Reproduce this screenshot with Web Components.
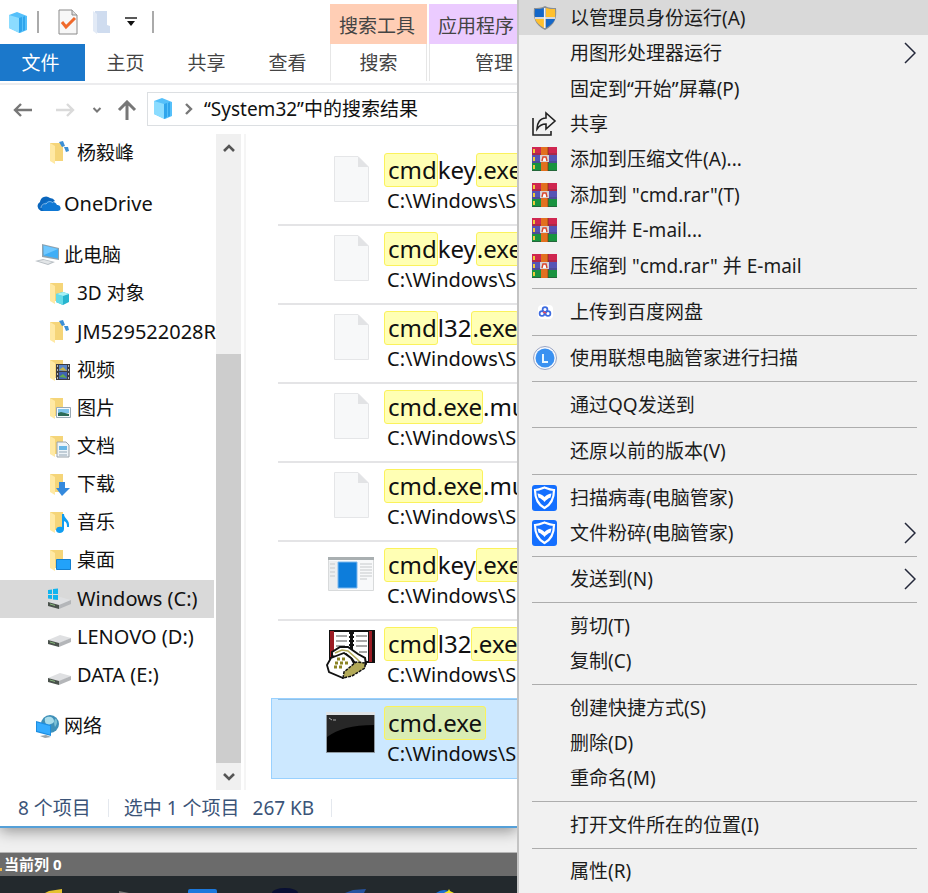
<!DOCTYPE html>
<html lang="zh-CN">
<head>
<meta charset="utf-8">
<title>System32 - 搜索结果</title>
<style>
html, body { margin: 0; height: 100%; }
body { font: 19px/26px "Noto Sans", "Noto Sans CJK SC", sans-serif; color: #111; background: #f0f0f0; overflow: hidden; }
</style>
</head>
<body>
<desktop-screen></desktop-screen>
<script>
const FOLDER = '<path d="M3 3h13v18H6l-3-2z" fill="#f5d579"/><path d="M3 3l5 3v18l-5-3z" fill="#ffe9a4"/>';
const DRIVE = '<path d="M1 16l12-5 11 3-12 6z" fill="#dfe0e2"/><path d="M1 16l11 3v4L1 20z" fill="#4a524c"/><path d="M12 19l12-5v4l-12 5z" fill="#b4b6b9"/><path d="M3 18l5 1.500" stroke="#86b77c"/>';
const BOX = '<path d="M0 3l8-3 10 4v14l-7 3-11-5z" fill="#55c0fa"/><path d="M0 3l10 3v15L0 16z" fill="#8bdcff"/><path d="M10 6l3-1v14l-3 2zM14 5l2-1v14l-2 1z" fill="#2fa5ec"/>';
const ICONS = {
  box: [18, 21, BOX],
  check: [24, 26, '<path d="M3 1h13l5 5v19H3z" fill="#f7f7f7" stroke="#8b8b8b"/><path d="M16 1v5h5" fill="#ddd" stroke="#8b8b8b"/><path d="M6 13l4 5 9-9" fill="none" stroke="#f0692b" stroke-width="3"/>'],
  paleFolder: [24, 26, '<path d="M5 2h12v14l3 1v7H8l-3-2z" fill="#cfdcef"/><path d="M3 2l4 3v20l-4-3z" fill="#e2eaf6"/>'],
  caret: [14, 12, '<path d="M1 2h12" stroke="#222" stroke-width="1.500"/><path d="M3 5h8l-4 5z" fill="#111"/>'],
  back: [20, 20, '<path d="M19 10H2M8 4l-6 6 6 6" fill="none" stroke="#777" stroke-width="2.400"/>'],
  forward: [20, 20, '<path d="M1 10h17M12 4l6 6-6 6" fill="none" stroke="#dadada" stroke-width="2.400"/>'],
  down: [10, 8, '<path d="M1.500 2L5 5.500 8.500 2" fill="none" stroke="#777" stroke-width="2"/>'],
  up: [20, 20, '<path d="M10 20V3M2 10l8-8 8 8" fill="none" stroke="#777" stroke-width="3"/>'],
  crumb: [10, 12, '<path d="M3 1l5 5-5 5" fill="none" stroke="#777" stroke-width="2.400"/>'],
  scrollUp: [14, 12, '<path d="M2 9l5-5 5 5" fill="none" stroke="#555" stroke-width="2.600"/>'],
  scrollDown: [14, 12, '<path d="M2 3l5 5 5-5" fill="none" stroke="#555" stroke-width="2.600"/>'],
  zip: [26, 26, FOLDER + '<path d="M12 2l4-1 2 5-3 1zM17 7l4 0 1 4-3 1z" fill="#3c8fd6"/>'],
  cloud: [26, 26, '<path d="M6 20a5 5 0 0 1-1-9 6 6 0 0 1 10-4 6 6 0 0 1 5 3l-9 4-2 6z" fill="#0a66bd"/><path d="M9 20a4 4 0 0 1 0-7 5 5 0 0 1 8-2 5 5 0 0 1 5 3 3 3 0 0 1 1 6z" fill="#0f78d4"/><path d="M6 17c0-3 3-5 5-4 2-3 5-3 7-1" fill="none" stroke="#b5d6f2" stroke-width=".7"/>'],
  pc: [26, 26, '<path d="M7 2l17 4v12L7 15z" fill="#8fa3b0"/><path d="M8.500 3.500L23 7v9.500l-14.500-3z" fill="#3faef6"/><path d="M8.500 3.500L23 7l-14 6z" fill="#70c8ff"/><path d="M0 19l8-2 12 3-7 3z" fill="#b9bfc4"/><path d="M3 19l6-1 8 2-4 2z" fill="#e3e6e8"/>'],
  cube: [26, 26, FOLDER + '<path d="M9 14l7-2 6 2v8l-6 3-7-3z" fill="#27b5cf"/><path d="M9 14l7 2v9l-7-3z" fill="#65dbe8"/><path d="M9 14l7-2 6 2-6 2z" fill="#a5f1f5"/>'],
  video: [26, 26, FOLDER + '<path d="M9 7h14v16H9z" fill="#3c3c42"/><path d="M12 8h8v6h-8z" fill="#5a86c8"/><path d="M12 15h8v7h-8z" fill="#3e62b4"/><path d="M12 13l4-3 4 4z" fill="#c4b44a"/><path d="M12 20l4-3 4 4z" fill="#5faa50"/><path d="M10.500 8v15M21.500 8v15" stroke="#bbb" stroke-dasharray="2 2"/>'],
  picture: [26, 26, FOLDER + '<path d="M9.500 12.500h14v10h-14z" fill="#f4f9fc" stroke="#9aa9b5"/><path d="M11 14h11v4H11z" fill="#7fc4ec"/><path d="M11 18l3-1 8 2v2H11z" fill="#2c6b58"/>'],
  doc: [26, 26, FOLDER + '<path d="M10 9h9l3 3v12H10z" fill="#eef4f8" stroke="#9aa3aa"/><path d="M12 13h8v4h-8z" fill="#69b6e6"/><path d="M12 19h8M12 22h8" stroke="#93a6b5"/>'],
  download: [26, 26, FOLDER + '<path d="M12 11h6v6h5l-8 8-6-8h3z" fill="#3489dd"/>'],
  music: [26, 26, FOLDER + '<path d="M15 5h2c0 5 6 5 5 13h-2c0-4-1-5-3-6v8c0 5-8 5-8 1 0-3 3-4 6-3z" fill="#109df0"/>'],
  desktop: [26, 26, FOLDER + '<path d="M9.500 12.500h14v10h-14z" fill="#22a2fa" stroke="#1480d0"/>'],
  winDrive: [26, 26, DRIVE + '<path d="M1 4l4-.5V8H1zM6 3l5-.6V8H6zM1 9h4v4l-4-.5zM6 9h5v5l-5-.6z" fill="#10b4ee"/>'],
  drive: [26, 26, DRIVE],
  network: [26, 26, '<circle cx="15" cy="11" r="9" fill="#3f90b8"/><path d="M10 5c5-3 9 0 9 3s-3 2-5 4-5-3-4-7z" fill="#a9dcea"/><path d="M20 14c3-4 2-7 1-8s-3 3-1 8z" fill="#7cc1d6"/><path d="M1 8l15 4v11L1 19z" fill="#1e8ee0"/><path d="M2 9.500l13 3.500v8.500L2 18z" fill="#35acff"/><path d="M5 23l6-1 5 2-6 1z" fill="#9ba5ab"/>'],
  file: [48, 48, '<path d="M7.500.5H31L41.500 11v34.500h-34z" fill="#f7f8f9" stroke="#e5e6e8"/><path d="M31 .5V11h10.500z" fill="#e2e3e5"/>'],
  app: [48, 48, '<path d="M1.500 6.500h45v33h-45z" fill="#f8f9fa" stroke="#d8dadb"/><path d="M1 6h46v3H1z" fill="#a9afb1"/><path d="M2 10h9v29H2z" fill="#eceeef"/><path d="M3 13h5M3 17h5M3 21h5M3 25h5M33 13h12M33 16h12M33 19h12M33 22h12M33 25h12M33 28h7" stroke="#c6c9cb"/><path d="M11 11h19v26H11z" fill="#0d7ddb" stroke="#7ab8ee"/>'],
  phone: [50, 50, '<path d="M3 1h46v33H3z" fill="#111"/><path d="M4 2h4v26H4zM43 2h3v31h-3z" fill="#9c1c24"/><path d="M8 3h16v26H8zM27 3h15v29H27z" fill="#fff"/><path d="M10 7h11M10 12h11M10 17h9M30 7h11M30 12h11M30 17h11M33 23h8" stroke="#8a8a8a" stroke-width="1.500"/><path d="M23 4h5M23 8h5M23 12h5M23 16h5" stroke="#111" stroke-width="2"/><path d="M6 27v-4l8-5h8l10 7 7 4 1 6-3 3-6-1-5-7-6-5-5 1-3 3z" fill="#fff" stroke="#111" stroke-width="2"/><path d="M9 24l7-3 6 1 9 8 5 5" fill="none" stroke="#b3aa59" stroke-width="1.500"/><path d="M1 36l4-7 13-5 7 5 5 9-13 11-14-6z" fill="#fff" stroke="#111" stroke-width="1.800"/><path d="M17 49l1-6 12-10 9 1v5l-13 8z" fill="#b3aa59" stroke="#111" stroke-width="1.500" stroke-dasharray="3 1"/><path d="M11 30h3M16 30h3M9 34h3M14 34h3M19 34h3M8 38h3M13 38h3" stroke="#8b8425" stroke-width="3"/>'],
  cmd: [50, 44, '<path d="M.5 2.500h48v39H.5z" fill="#000" stroke="#8d979f"/><path d="M0 1h49v3H0z" fill="#dfe3e6"/><path d="M1 4h47v10C26 14 12 18 1 26z" fill="#272727"/><path d="M3 7l3 2M7 9h3" stroke="#aaa"/>'],
  shield: [26, 26, '<path d="M13 1c4 2 7 2 11 2 1 10-1 17-11 22C3 20 1 13 2 3c4 0 7 0 11-2z" fill="#8a8f94"/><path d="M12 3v9H3c-.5-3 0-5 0-8 4 0 6 0 9-1z" fill="#1467c8"/><path d="M14 3v9h9c.5-3 0-5 0-8-4 0-6 0-9-1z" fill="#ffc02e"/><path d="M12 14v9c-5-3-8-6-9-9z" fill="#ffc02e"/><path d="M14 14v9c5-3 8-6 9-9z" fill="#1467c8"/><path d="M12.700 3v20M3 13h20" stroke="#f2f2f2" stroke-width="1.600"/>'],
  share: [26, 26, '<path d="M1 7v17h18v-4" fill="none" stroke="#222" stroke-width="1.600"/><path d="M14 7V2l9 8-9 8v-5c-4 0-7 2-9 5 0-6 3-11 9-11z" fill="none" stroke="#222" stroke-width="1.600"/>'],
  rar: [26, 26, '<path d="M0 1h25v8H0z" fill="#cf2650"/><path d="M0 9h25v8H0z" fill="#5554b5"/><path d="M0 17h25v8H0z" fill="#199340"/><path d="M0 8h25M0 16h25M0 24.500h25" stroke="#333" stroke-opacity=".45"/><path d="M2 3v4M2 11v4M2 19v4" stroke="#f0cb3a" stroke-width="2"/><path d="M9 1h7v24H9z" fill="#e2701f"/><path d="M16 1v24" stroke="#6b3010" stroke-opacity=".6"/><path d="M8 9h9v7H8z" fill="#d6d3d6"/><path d="M10 15l1-4h3l1 4" fill="#fff" stroke="#d8452c" stroke-width="1.400"/>'],
  baidu: [26, 26, '<rect x="6" y="6" width="15" height="14" rx="4" fill="#fff"/><g fill="none" stroke="#3d6be0" stroke-width="1.700"><circle cx="13" cy="10.500" r="2.400"/><circle cx="10" cy="14.500" r="2.400"/><circle cx="16" cy="14.500" r="2.400"/></g><path d="M11 13l3 1" stroke="#e84a62" stroke-width="1.600"/>'],
  lenovo: [26, 26, '<circle cx="13" cy="13" r="11.500" fill="#f7f9fd" stroke="#9aa5c4"/><circle cx="13" cy="13" r="9.500" fill="#3a91f1"/><path d="M11 9v8h5" fill="none" stroke="#e8f6ff" stroke-width="2"/>'],
  guard: [26, 26, '<rect width="25" height="26" rx="3" fill="#146fff"/><path d="M3 5c4 0 6-1 9.500-2.500C16 4 18 5 22 5c0 8-2 14-9.500 18C5 19 3 13 3 5z" fill="none" stroke="#fff" stroke-width="2.200"/><path d="M5.500 8.500c2 0 5 1.500 7 3.500 2-2 5-3.500 7-3.500l-1 4c-2.500 1-4.500 2.500-6 4.500-1.500-2-3.500-3.500-6-4.500z" fill="#fff"/>'],
  chevron: [12, 22, '<path d="M1 1l10 10L1 21" fill="none" stroke="#24283a" stroke-width="1.500"/>'],
  taskbar: [517, 17, '<path d="M45 17l4-2 13-2v4z" fill="#e5c22f"/><path d="M119 17v-2l10 2z" fill="#777"/><rect x="188" y="13" width="29" height="6" rx="2" fill="#1c78dc"/><ellipse cx="285" cy="17" rx="13" ry="5" fill="#090f33"/><path d="M345 17l8-3 13-1-2 4z" fill="#27539f"/><path d="M436 17q8-6 17 0z" fill="#1c6fce"/><path d="M449 13l1 2 4 2h-10l4-2z" fill="#f2e51c"/>']
};

function define(name, render) {
  customElements.define(name, class extends HTMLElement {
    connectedCallback() {
      if (this.shadowRoot) return;
      const root = this.attachShadow({ mode: 'open' });
      const t = document.createElement('template');
      t.innerHTML = render(this);
      root.append(t.content.cloneNode(true));
    }
  });
}
const RESET = 'button,a{font:inherit;color:inherit;background:none;border:0;padding:0;margin:0;text-align:left;text-decoration:none;box-sizing:border-box;white-space:pre}';
const icon = n => `<ui-icon name="${n}"></ui-icon>`;

define('ui-icon', el => {
  const [w, h, art] = ICONS[el.getAttribute('name')];
  return `<style>:host{display:block;flex:none}svg{display:block}</style><svg width="${w}" height="${h}" viewBox="0 0 ${w} ${h}" aria-hidden="true">${art}</svg>`;
});

define('ribbon-header', () => `<style>${RESET}
:host{display:block;border-bottom:2px solid #ececee;color:#444}
.top{display:flex;height:44px}
.qat{display:flex;flex:none;align-items:center;width:330px;box-sizing:border-box;padding-left:9px}
.bar{width:2px;height:22px;background:#aaa;margin-left:10px}
.qat button{margin-left:17px}.qat button+button{margin-left:10px}.qat .bar:last-child{margin-left:14px}
.ctx{flex:none;box-sizing:border-box;margin-top:4px;height:40px;padding:9px 9px 0;white-space:nowrap;line-height:26px}
.search{width:97px;background:#ffceb5;margin-right:2px}.app{flex:1;background:#ebcbff;padding-right:0}
.tabs{display:flex;height:39px}
.tabs button{flex:none;width:81px;height:37px;text-align:center}
.tabs .file{width:85px;padding-right:4px;background:#1b78cb;color:#fff}
.tabs .s{width:97px;margin-left:2px;margin-right:2px;border:solid #e6e6e6;border-width:0 1px}
.tabs .a{flex:1;padding-left:45px;text-align:left;border-left:1px solid #e6e6e6}
</style><div class="top"><div class="qat">${icon('box')}<span class="bar"></span><button aria-label="属性">${icon('check')}</button><button aria-label="新建文件夹">${icon('paleFolder')}</button><button aria-label="自定义">${icon('caret')}</button><span class="bar"></span></div>
<div class="ctx search">搜索工具</div><div class="ctx app">应用程序</div></div>
<div class="tabs"><button class="file">文件</button><button>主页</button><button>共享</button><button>查看</button><button class="s">搜索</button><button class="a">管理</button></div>`);

define('address-bar', () => `<style>${RESET}
:host{display:flex;align-items:center;height:49px;padding-left:13px;box-sizing:border-box}
.back{margin-right:22px}.fwd{margin-right:17px}.down{margin-right:15px}.up{margin-right:10px}
.path{flex:1;display:flex;align-items:center;gap:11px;height:34px;border:solid #dcdfe2;border-width:1px 0 1px 1px;padding-left:6px;box-sizing:border-box;color:#111;margin-bottom:2px}
</style><button class="back" aria-label="后退">${icon('back')}</button><button class="fwd" aria-label="前进">${icon('forward')}</button><button class="down" aria-label="历史">${icon('down')}</button><button class="up" aria-label="上移">${icon('up')}</button>
<div class="path">${icon('box')}${icon('crumb')}<button>“System32”中的搜索结果</button></div>`);

define('nav-row', el => `<style>${RESET}
:host{display:flex;flex:1;min-height:0}
:host([latin]){font-size:20px}
:host([group]){margin-top:13px}
a{flex:1;display:flex;align-items:center;gap:4px;padding-left:47px}
:host([root]) a{padding-left:35px;gap:3px}
:host([selected]) a{background:#d9d9d9}
</style><a href="#">${icon(el.getAttribute('icon'))}<span><slot></slot></span></a>`);

const NAV = [['zip','杨毅峰',''],['cloud','OneDrive','root group latin'],['pc','此电脑','root group'],['cube','3D 对象',''],['zip','JM529522028R','latin'],['video','视频',''],['picture','图片',''],['doc','文档',''],['download','下载',''],['music','音乐',''],['desktop','桌面',''],['winDrive','Windows (C:)','selected latin'],['drive','LENOVO (D:)','latin'],['drive','DATA (E:)','latin'],['network','网络','root group']];
define('nav-pane', () => `<style>${RESET}
:host{display:flex;width:246px;flex:none;box-sizing:border-box;border-right:2px solid #f5f5f5}
nav{width:214px;display:flex;flex-direction:column;padding-bottom:45px;box-sizing:border-box;margin-right:2px}
.scroll{width:25px;display:flex;flex-direction:column;background:#f0f0f0}
.scroll button{height:27px;display:flex;align-items:center;justify-content:center}
.track{flex:1;display:flex;flex-direction:column;justify-content:flex-end}
.thumb{height:68%;background:#cdcdcd}
</style><nav>${NAV.map(([i,t,a]) => `<nav-row icon="${i}" ${a}>${t}</nav-row>`).join('')}</nav>
<div class="scroll"><button aria-label="向上滚动">${icon('scrollUp')}</button><div class="track"><div class="thumb"></div></div><button aria-label="向下滚动">${icon('scrollDown')}</button></div>`);

define('file-row', el => `<style>
:host{display:flex;flex:1;min-height:0;padding-left:6px;border:1px solid transparent;border-width:0 0 0 1px;box-sizing:border-box}
:host([selected]){background:#cce8ff;border:1px solid #99d1ff;border-right:0}
.row{flex:1;min-width:0;display:flex;padding:6px 0 0 48px;border-top:2px solid #e4e4e6}
:host([first]) .row{border-color:transparent}
:host([selected]) .row{border-top:1px solid #8fbfe6}
.ic{width:50px;height:50px;flex:none;display:flex;align-items:center;justify-content:center;margin-right:8px;margin-top:2px}
.text{flex:1;min-width:0}
.name{font-size:24px;line-height:34px;height:34px;white-space:nowrap;display:flex}
.path{font-size:20px;line-height:28px;padding-left:3px;white-space:nowrap}
mark{display:block;height:32px;line-height:32px;background:#ffffb4;border:1px solid #fbf25c;border-radius:3px;color:inherit}
mark:first-child{padding-left:3px}
:host([selected]) mark{background:#daedb3;padding-right:3px}
</style><div class="row"><div class="ic">${icon(el.getAttribute('icon'))}</div><div class="text"><div class="name">${el.getAttribute('name').replace(/\[/g,'<mark>').replace(/\]/g,'</mark>')}</div><div class="path">C:\\Windows\\S</div></div></div>`);

const FILES = [['file','[cmd]key[.exe]'],['file','[cmd]key[.exe]'],['file','[cmd]l32[.exe]'],['file','[cmd.exe].mu'],['file','[cmd.exe].mu'],['app','[cmd]key[.exe]'],['phone','[cmd]l32[.exe]'],['cmd','[cmd.exe]']];
define('file-list', () => `<style>:host{flex:1;display:flex;flex-direction:column;padding:11px 0 11px 25px;min-width:0}</style>${FILES.map(([i,n],k) => `<file-row icon="${i}" name="${n}" ${k === 0 ? 'first' : k === 7 ? 'selected' : ''}></file-row>`).join('')}`);

define('status-bar', () => `<style>:host{display:flex;align-items:center;height:36px;padding-left:18px;color:#3b5478;white-space:pre}
i{width:1px;height:18px;background:#e4e8ee;margin:0 15px 0 17px}span+span{margin-left:13px}</style><span>8 个项目</span><i></i><span>选中 1 个项目</span><span>267 KB</span><i></i>`);

define('explorer-window', () => `<style>:host{display:flex;flex-direction:column;flex:1;min-height:0;background:#fff;border-bottom:2px solid #55a0d8;box-shadow:0 3px 14px #0006}
.body{display:flex;flex:1;min-height:0}</style><ribbon-header></ribbon-header><address-bar></address-bar><div class="body"><nav-pane></nav-pane><file-list></file-list></div><status-bar></status-bar>`);

define('menu-item', el => `<style>${RESET}
:host{display:flex;flex:1;min-height:0}
button{flex:1;display:flex;align-items:center;padding:0 12px 0 13px;gap:12px}
:host([hot]) button{background:#d9d9d9}
.ic{width:26px;flex:none}.label{flex:1}
</style><button role="menuitem"><span class="ic">${el.getAttribute('icon') ? icon(el.getAttribute('icon')) : ''}</span><span class="label"><slot></slot></span>${el.hasAttribute('sub') ? icon('chevron') : ''}</button>`);

const MENU = [['shield','以管理员身份运行(A)','hot'],['','用图形处理器运行','sub'],['','固定到“开始”屏幕(P)'],['share','共享'],['rar','添加到压缩文件(A)...'],['rar','添加到 "cmd.rar"(T)'],['rar','压缩并 E-mail...'],['rar','压缩到 "cmd.rar" 并 E-mail'],0,['baidu','上传到百度网盘'],0,['lenovo','使用联想电脑管家进行扫描'],0,['','通过QQ发送到'],0,['','还原以前的版本(V)'],0,['guard','扫描病毒(电脑管家)'],['guard','文件粉碎(电脑管家)','sub'],0,['','发送到(N)','sub'],0,['','剪切(T)'],['','复制(C)'],0,['','创建快捷方式(S)'],['','删除(D)'],['','重命名(M)'],0,['','打开文件所在的位置(I)'],0,['','属性(R)']];
define('context-menu', () => `<style>
:host{display:flex;flex-direction:column;background:#f1f1f1;border-left:2px solid #c4c4c4;padding-bottom:4px;box-sizing:border-box;color:#1c1c1c}
hr{flex:none;height:1px;width:auto;margin:5px 11px 5px 13px;border:0;background:#adadad}
</style>${MENU.map(m => m ? `<menu-item icon="${m[0]}" ${m[2] || ''}>${m[1]}</menu-item>` : '<hr>').join('')}`);

define('desktop-screen', () => `<style>
:host{display:grid;grid-template-columns:minmax(0,517fr) minmax(0,411fr);height:100vh;overflow:hidden}
.desk{min-height:0;display:flex;flex-direction:column;overflow:hidden}
.gap{height:24px;flex:none}
.strip{height:23px;flex:none;background:linear-gradient(#eeb64a,#eeb64a) 0 15px/2px 3px no-repeat #6b6b6b;border-top:1px solid #b5b5b5;color:#fff;font-weight:700;font-size:15px;line-height:23px;padding-left:4px;white-space:nowrap}
.task{height:17px;flex:none;background:#23292d;overflow:hidden}
</style><div class="desk"><explorer-window></explorer-window><div class="gap"></div><div class="strip">当前列 0</div><div class="task">${icon('taskbar')}</div></div><context-menu role="menu"></context-menu>`);
</script>
</body>
</html>
